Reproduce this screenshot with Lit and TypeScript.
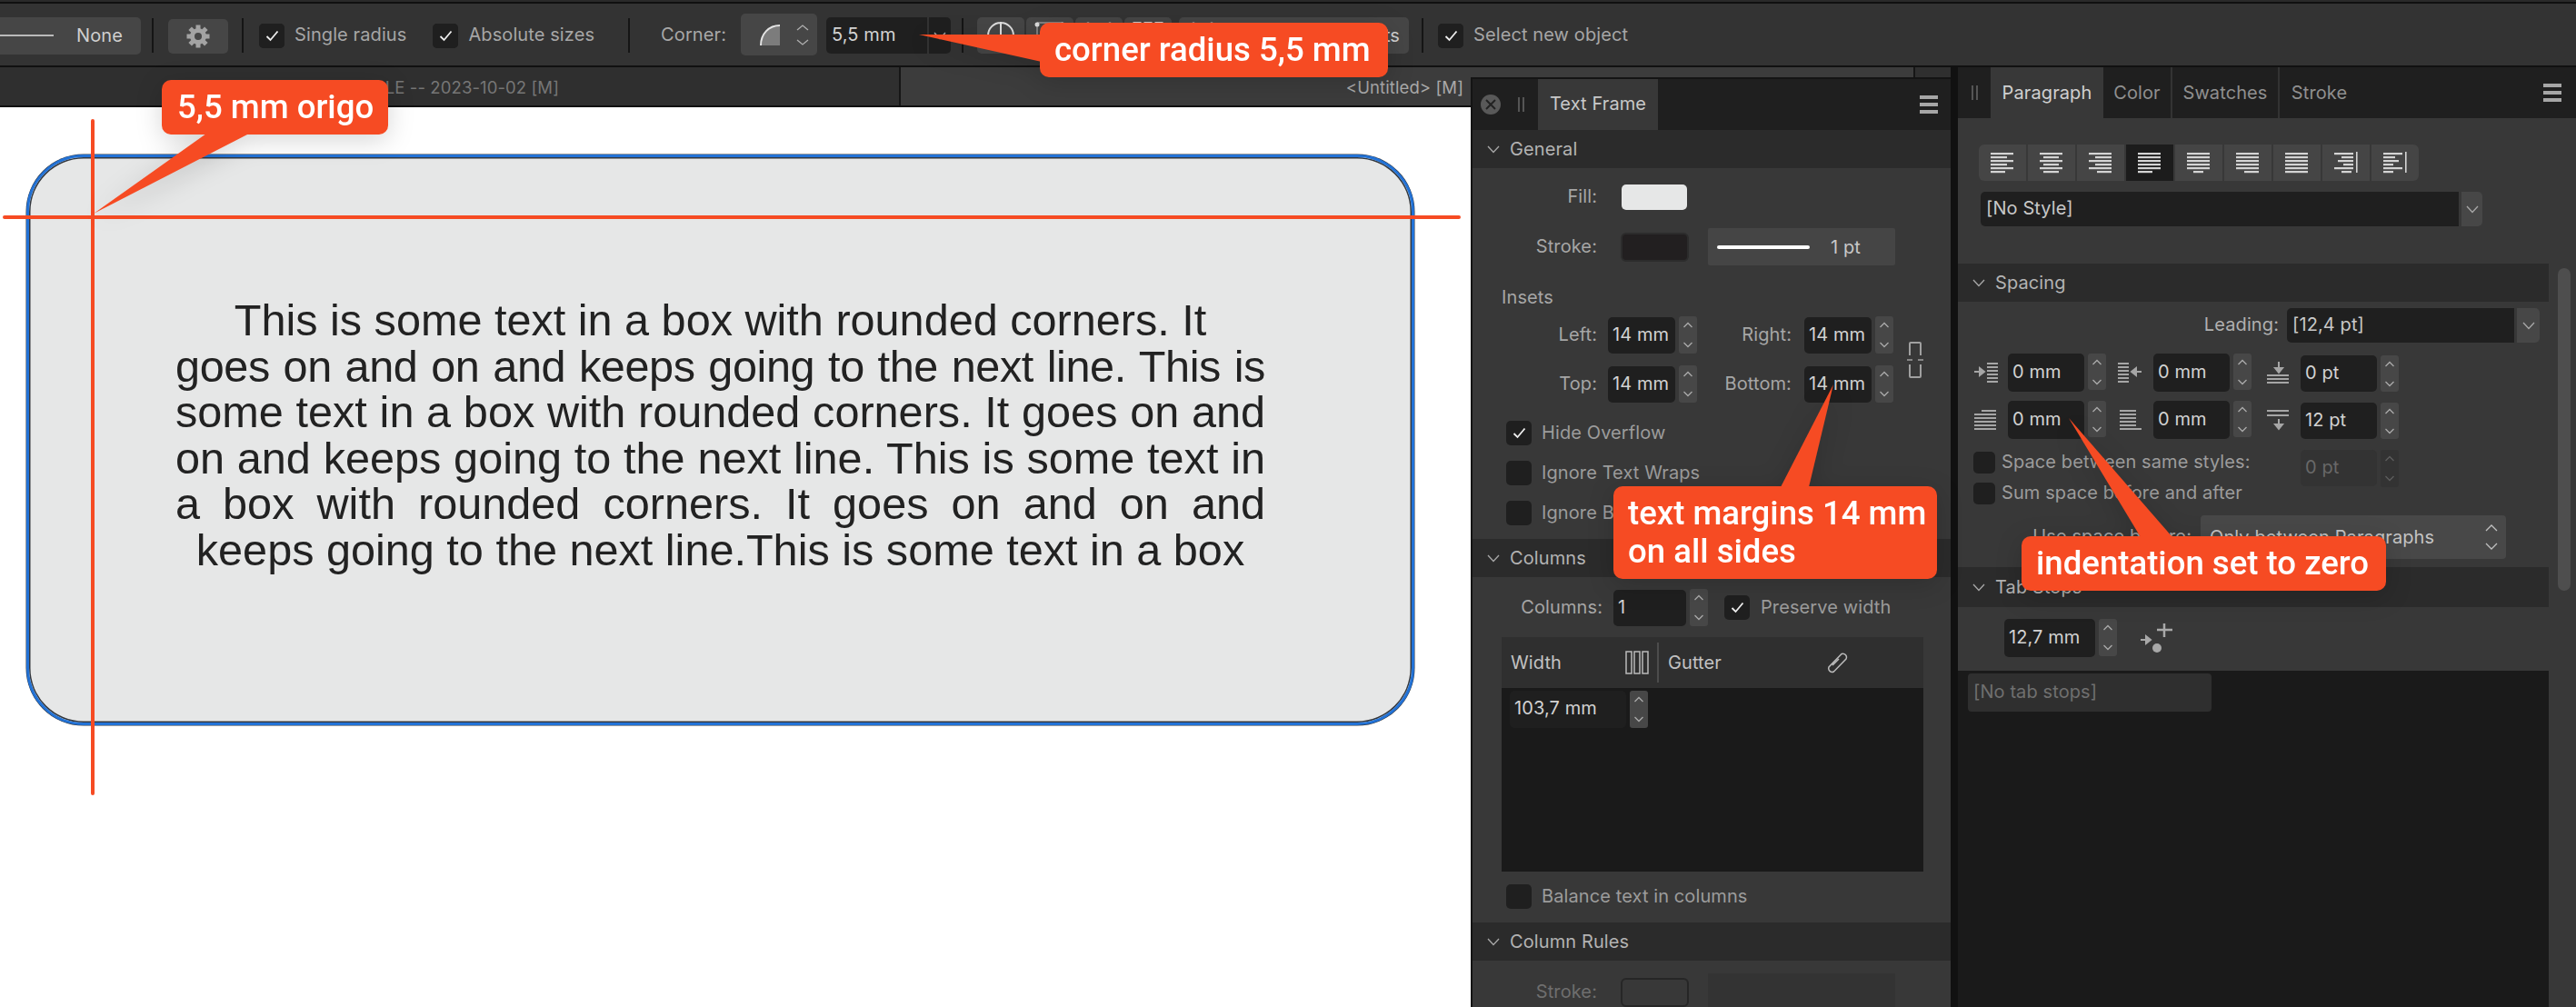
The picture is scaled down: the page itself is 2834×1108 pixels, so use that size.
import { LitElement, html, css, svg } from "lit";
import { customElement } from "lit/decorators.js";

const chev = html`<svg class="chev" width="14" height="9" viewBox="0 0 14 9"><path d="M1 1l6 6.5L13 1" fill="none" stroke="#a8a8a8" stroke-width="1.3"/></svg>`;
const stepper = (cls = "") => html`<span class="stepper ${cls}"><svg width="12" height="29" viewBox="0 0 12 29"><path d="M1.5 6l4.5-4.5L10.500 6M1.500 23l4.500 4.500 4.500-4.500" fill="none" stroke="currentColor" stroke-width="1.300"/></svg></span>`;
const input = (t: string, cls = "") => html`<span class="input ${cls}">${t}</span>`;
const check = (on: boolean, cls = "") => html`<span class="check ${cls}">${on ? html`<svg width="15" height="13" viewBox="0 0 15 13"><path d="M1.500 7l4 4 8-9.500" fill="none" stroke="#eee" stroke-width="1.800"/></svg>` : ""}</span>`;

const lines = (rows: [number, number][], extra: any = "") => html`<svg width="26" height="24" viewBox="0 0 26 24">${rows.map((r, i) => svg`<rect x=${r[0]} y=${1 + i * 4} width=${r[1]} height="2.200" fill="#d4d4d4"/>`)}${extra}</svg>`;
const alignIcons = [
  [[0, 25], [0, 18], [0, 25], [0, 18], [0, 25], [0, 16]],
  [[0, 25], [4, 17], [0, 25], [4, 17], [0, 25], [4, 17]],
  [[0, 25], [7, 18], [0, 25], [7, 18], [0, 25], [9, 16]],
  [[0, 25], [0, 25], [0, 25], [0, 25], [0, 25], [0, 16]],
  [[0, 25], [0, 25], [0, 25], [0, 25], [0, 25], [7, 11]],
  [[0, 25], [0, 25], [0, 25], [0, 25], [0, 25], [9, 16]],
  [[0, 25], [0, 25], [0, 25], [0, 25], [0, 25], [0, 25]],
] as [number, number][][];
const barIcon = (rows: [number, number][]) => lines(rows, svg`<rect x="24" y="0" width="1.600" height="23" fill="#d4d4d4"/>`);

const ic = "#a6a6a6";
const indent1 = html`<svg class="sp" width="26" height="24" viewBox="0 0 26 24"><path d="M0 11h8M6 7l5 4-5 4z" stroke=${ic} stroke-width="2" fill=${ic}/>${[1, 5, 9, 13, 17, 21].map((y) => svg`<rect x="14" y=${y} width="12" height="2" fill=${ic}/>`)}</svg>`;
const indent2 = html`<svg class="sp" width="26" height="24" viewBox="0 0 26 24">${[1, 5, 9, 13, 17, 21].map((y) => svg`<rect x="0" y=${y} width="12" height="2" fill=${ic}/>`)}<path d="M26 11h-8M20 7l-5 4 5 4z" stroke=${ic} stroke-width="2" fill=${ic}/></svg>`;
const before = html`<svg class="sp" width="26" height="24" viewBox="0 0 26 24"><path d="M13 0v9M9 7l4 5 4-5z" stroke=${ic} stroke-width="2" fill=${ic}/><rect y="14" width="24" height="2" fill=${ic}/><rect y="18" width="24" height="2" fill=${ic}/><rect y="22" width="24" height="2" fill=${ic}/></svg>`;
const first = html`<svg class="sp" width="26" height="24" viewBox="0 0 26 24"><rect x="8" y="1" width="16" height="2" fill=${ic}/>${[5, 9, 13, 17, 21].map((y) => svg`<rect y=${y} width="24" height="2" fill=${ic}/>`)}</svg>`;
const last = html`<svg class="sp" width="26" height="24" viewBox="0 0 26 24">${[1, 5, 9, 13, 17].map((y) => svg`<rect x="2" y=${y} width="18" height="2" fill=${ic}/>`)}<rect x="2" y="21" width="24" height="2" fill=${ic}/></svg>`;
const after = html`<svg class="sp" width="26" height="24" viewBox="0 0 26 24"><rect y="1" width="24" height="2" fill=${ic}/><rect y="6" width="24" height="2" fill=${ic}/><path d="M13 11v9M9 17l4 5 4-5z" stroke=${ic} stroke-width="2" fill=${ic}/></svg>`;
const burger = html`<span class="burger"><i></i><i></i><i></i></span>`;

@customElement("app-root")
export class AppRoot extends LitElement {
  static styles = css`
    :host { display: block; }
    * { box-sizing: border-box; }
    .root { position: relative; width: 2834px; height: 1108px; overflow: hidden; background: #111; font: 20px/24px Inter, "Liberation Sans", sans-serif; letter-spacing: 0.1px; color: #a6a6a6; display: flex; flex-direction: column; }
    .top { height: 4px; background: #2a2a2a; border-bottom: 2px solid #101010; flex: none; }
    .toolbar { height: 68px; flex: none; background: #333; display: flex; align-items: center; padding-top: 2px; }
    .main { height: 1036px; flex: none; margin-top: 2px; display: flex; }
    .none { width: 155px; height: 41px; background: #464646; border-radius: 0 5px 5px 0; display: flex; align-items: center; color: #cfcfcf; }
    .none i { width: 59px; height: 1.500px; background: #bbb; margin-right: 25px; }
    .tsep { width: 2px; height: 38px; background: #151515; flex: none; }
    .gear { width: 66px; height: 38px; margin-left: 16px; margin-top: 2px; background: #464646; border-radius: 5px; display: flex; align-items: center; justify-content: center; }
    .s1 { margin-left: 12px; } .s2 { margin-left: 15px; } .s3 { margin-left: 37px; } .s4 { margin-left: 12px; } .s5 { margin-left: 14px; }
    .tcheck { margin-left: 17px; width: 28px; height: 28px; }
    .t1 { margin-left: 11px; padding-bottom: 2px; }
    .tcheck.b { margin-left: 29px; }
    .tcheck.c { margin-left: 16px; }
    .corner-l { margin-left: 34px; color: #a8a8a8; padding-bottom: 2px; }
    .cbtn { width: 84px; height: 46px; margin-left: 16px; margin-top: -2px; background: #464646; border-radius: 5px; display: flex; align-items: center; position: relative; }
    .cbtn .shape { margin-left: 21px; }
    .cbtn .stp { margin-left: 17px; color: #aaa; }
    .tinput { width: 111px; height: 40px; margin-left: 10px; background: #1f1f1f; border-radius: 5px 0 0 5px; color: #d2d2d2; padding-left: 6px; line-height: 38px; }
    .tchev { width: 24px; height: 40px; margin-left: 2px; background: #1f1f1f; border-radius: 0 5px 5px 0; display: flex; align-items: center; justify-content: center; }
    .tb { height: 40px; width: 52px; background: #464646; border-radius: 5px; flex: none; margin-left: 2px; display: flex; justify-content: center; padding-top: 5px; }
    .tb.f { margin-left: 15px; }
    .tb.w { width: 253px; margin-left: 8px; justify-content: flex-start; padding: 0 10px 0 12px; line-height: 40px; color: #cfcfcf; }
    .tb.w span { flex: 1; text-align: right; }

    .docs { width: 2154px; flex: none; display: grid; grid-template-columns: 1618px 528px 8px; grid-template-rows: 42px 2px 1fr; height: 1034px; background: #111; }
    .tabs { grid-column: 1 / 3; grid-row: 1; display: flex; background: #2f2f2f; font-size: 18.500px; line-height: 44px; }
    .tab1 { width: 989px; padding-right: 374px; text-align: right; color: #767676; white-space: nowrap; overflow: hidden; }
    .tab2 { width: 1118px; background: #3c3c3c; border-left: 2px solid #161616; border-right: 2px solid #161616; text-align: right; padding-right: 495px; color: #a9a9a9; }
    .canvas { grid-column: 1; grid-row: 2 / 4; background: #fff; margin-top: 2px; padding: 52px 0 0 29px; }
    .box { width: 1527px; height: 628px; border-radius: 63px; border: 3px solid #2272d6; box-shadow: inset 0 0 0 1.500px #34383e, 0 0 0 0.500px #30343a; background: #e6e7e7; padding: 154px 161px 0; font: 48.600px/50.600px "Liberation Sans", Arial, sans-serif; letter-spacing: 0; color: #222; }
    .box div { white-space: nowrap; text-align: center; }
    .box div.j { white-space: normal; text-align: justify; text-align-last: justify; }
    .box div.tight { letter-spacing: -0.4px; }

    .tf { grid-column: 2; grid-row: 1 / 4; margin-top: 11px; z-index: 1; background: #2a2a2a; border-left: 2px solid #141414; border-top: 2px solid #141414; display: flex; flex-direction: column; height: 1023px; overflow: hidden; }
    .tfhead { height: 56px; flex: none; background: #1f1f1f; display: flex; align-items: center; }
    .close { width: 22px; height: 22px; border-radius: 50%; background: #595959; margin-left: 9px; display: flex; align-items: center; justify-content: center; }
    .grip { width: 7px; height: 16px; border-left: 2px solid #555; border-right: 2px solid #555; margin-left: 19px; }
    .tft { width: 132px; height: 56px; background: #383838; margin-left: 15px; line-height: 54px; text-align: center; color: #c9c9c9; }
    .burger { width: 20px; display: flex; flex-direction: column; gap: 4px; flex: none; }
    .burger i { height: 4px; background: #a6a6a6; }
    .tfhead .burger { margin-left: 288px; }
    .sec { width: 526px; flex: none; }
    .sh { height: 42px; background: #2b2b2b; display: flex; align-items: center; padding-left: 16px; color: #b3b3b3; }
    .sh .chev { margin-right: 11px; }
    .sb { background: #383838; overflow: hidden; }
    .sb.g { height: 408px; }
    .sb.c { height: 380px; }
    .sb.r { height: 60px; }
    .row { display: flex; align-items: center; }
    .lab { flex: none; text-align: right; padding-bottom: 2px; }
    .w137 { width: 137px; }
    .fill { margin-top: 18px; height: 28px; }
    .sw1 { width: 72px; height: 28px; margin-left: 27px; background: #e6e7e7; border-radius: 5px; }
    .strk { margin-top: 20px; height: 41px; }
    .sw2 { width: 75px; height: 32px; margin-left: 26px; background: #221f20; border: 2px solid #2c2c2c; border-radius: 6px; }
    .sbtn { width: 206px; height: 41px; margin-left: 21px; background: #454545; border-radius: 2px; display: flex; align-items: center; padding-left: 10px; color: #c8c8c8; }
    .sbtn i { width: 102px; height: 4px; background: #fff; border-radius: 2px; margin-right: 23px; }
    .ins { margin: 23px 0 0 32px; }
    .insets { display: flex; margin-top: 9px; }
    .irows { display: flex; flex-direction: column; gap: 13px; }
    .input { flex: none; height: 40px; background: #1f1f1f; border-radius: 5px; color: #d2d2d2; line-height: 38px; padding-left: 5px; }
    .w74 { width: 74px; margin-left: 12px; }
    .w74.rr { margin-left: 14px; }
    .stepper { flex: none; width: 20px; height: 41px; margin-left: 4px; background: #474747; border-radius: 3px; display: flex; align-items: center; justify-content: center; color: #aaa; align-self: flex-start; }
    .w104 { width: 104px; }
    .link { margin-left: 15px; align-self: center; }
    .check { flex: none; display: flex; align-items: center; justify-content: center; width: 28px; height: 27px; background: #1f1f1f; border-radius: 5px; }
    .cks { margin: 20px 0 0 37px; display: flex; flex-direction: column; gap: 17px; }
    .ckl { margin-left: 11px; white-space: nowrap; color: #9c9c9c; padding-bottom: 2px; }
    .colrow { margin-top: 13px; height: 41px; }
    .w143 { width: 143px; }
    .w80 { width: 80px; margin-left: 12px; }
    .colrow .check { margin-left: 18px; }
    .ckl.p { margin-left: 12px; }
    .tbl { width: 464px; margin: 12px 0 0 32px; }
    .th { height: 56px; background: #2f2f2f; display: flex; align-items: center; color: #c2c2c2; }
    .th .w { width: 136px; padding-left: 10px; }
    .th .d { width: 2px; height: 44px; background: #4c4c4c; margin-left: 9px; }
    .th .gut { width: 174px; margin-left: 10px; }
    .tbody { height: 202px; background: #1a1a1a; padding: 3px 9px; display: flex; }
    .w128 { width: 128px; height: 41px; background: #1f1f1f; }
    .bal { margin: 14px 0 0 37px; height: 27px; }
    .dim { color: #6e6e6e; }
    .crow { margin-top: 14px; height: 41px; }
    .sw3 { width: 75px; height: 32px; margin-left: 26px; border: 2px solid #262626; border-radius: 6px; }
    .sb3 { width: 206px; height: 41px; margin-left: 21px; background: #333; }

    .right { width: 680px; flex: none; display: flex; flex-direction: column; background: #383838; height: 1034px; }
    .rtabs { height: 56px; flex: none; background: #1f1f1f; display: flex; align-items: center; }
    .rtabs .grip { margin-left: 15px; height: 16px; }
    .rt { height: 56px; line-height: 56px; text-align: center; border-right: 2px solid #333; color: #8f8f8f; flex: none; }
    .rt.a { width: 124px; margin-left: 14px; background: #383838; color: #d0d0d0; border: 0; }
    .rt.b { width: 76px; } .rt.c { width: 118px; } .rt.d { width: 87px; border: 0; }
    .rtabs .burger { margin-left: 203px; }
    .rbody { display: flex; flex: 1; }
    .rcol { width: 650px; flex: none; display: flex; flex-direction: column; }
    .thumbwrap { padding: 165px 0 0 10px; }
    .thumb { width: 14px; height: 355px; border-radius: 7px; background: #4e4e4e; }
    .pbody { height: 160px; padding: 29px 0 0 23px; }
    .aligns { display: flex; gap: 2px; width: 484px; }
    .al { width: 52px; height: 40px; background: #454545; display: flex; align-items: center; justify-content: center; }
    .al.first { border-radius: 6px 0 0 6px; } .al.lastb { border-radius: 0 6px 6px 0; }
    .al.on { background: #1c1c1c; }
    .style { display: flex; margin: 12px 0 0 2px; }
    .sel { height: 38px; line-height: 36px; background: #1f1f1f; border-radius: 5px 0 0 5px; padding-left: 6px; color: #c8c8c8; flex: none; }
    .w526 { width: 526px; }
    .selc { width: 23px; height: 38px; margin-left: 3px; background: #474747; border-radius: 0 5px 5px 0; display: flex; align-items: center; justify-content: center; flex: none; }
    .sp-body { height: 292px; background: #383838; overflow: hidden; }
    .lead { margin-top: 7px; height: 38px; }
    .w353 { width: 353px; color: #b0b0b0; }
    .w250 { width: 250px; margin-left: 9px; }
    .selc.w25 { width: 25px; }
    .srow { display: flex; margin-top: 12px; height: 42px; align-items: flex-start; }
    .srow.two { margin-top: 10px; }
    .srow .sp { margin-top: 9px; flex: none; }
    .i1 { margin-left: 18px; } .i2 { margin-left: 13px; } .i3 { margin-left: 17px; }
    .w84 { width: 84px; height: 42px; margin-left: 11px; line-height: 40px; }
    .w84.m13 { margin-left: 13px; }
    .w84.t { height: 40px; margin-top: 2px; line-height: 38px; }
    .srow .t + .stepper { margin-top: 2px; }
    .srow .stepper { height: 40px; }
    .cks2 { display: flex; margin-top: 12px; height: 60px; }
    .cksl { width: 377px; padding: 2px 0 0 17px; display: flex; flex-direction: column; gap: 10px; flex: none; }
    .cksl .check { width: 24px; height: 24px; }
    .ck2 { display: flex; align-items: center; height: 24px; }
    .ckl.n { margin-left: 7px; }
    .dis { width: 84px; background: #333; color: #686868; }
    .dis + .stepper { background: #333; color: #5e5e5e; height: 41px; }
    .use { margin-top: 12px; display: flex; align-items: center; height: 48px; }
    .w257 { width: 257px; }
    .usel { width: 336px; height: 48px; margin-left: 10px; background: #484848; border-radius: 4px; display: flex; align-items: center; padding: 0 8px 0 10px; color: #c4c4c4; }
    .usel span { flex: 1; }
    .th2 { height: 44px; }
    .tsb { height: 70px; display: flex; align-items: flex-start; padding: 13px 0 0 51px; }
    .w100 { width: 100px; height: 42px; line-height: 40px; }
    .tsb .addic { margin-left: 26px; margin-top: 4px; }
    .list { flex: 1; background: #1a1a1a; padding: 3px 11px; }
    .item { width: 268px; height: 42px; background: #2f2f2f; border-radius: 4px; line-height: 40px; padding-left: 6px; color: #6f6f6f; }

    .annot { position: absolute; inset: 0; pointer-events: none; z-index: 5; filter: drop-shadow(0 6px 14px rgba(0, 0, 0, 0.16)); }
    .annot svg { position: absolute; left: 0; top: 0; }
    .cross { position: absolute; left: 0; top: 0; z-index: 3; pointer-events: none; }
    .call { position: absolute; background: #f64b23; border-radius: 10px; color: #fff; font: 500 36.600px/42px Roboto, "Liberation Sans", sans-serif; letter-spacing: 0; white-space: nowrap; padding: 9px 15px; }
    .c1 { left: 178px; top: 88px; width: 249px; height: 60px; padding-left: 17px; }
    .c2 { left: 1144px; top: 25px; width: 383px; height: 60px; padding-left: 16px; }
    .c3 { left: 1775px; top: 535px; width: 356px; height: 102px; padding-left: 16px; }
    .c4 { left: 2224px; top: 590px; width: 401px; height: 60px; padding-left: 16px; }
  `;

  render() {
    return html`<div class="root">
      <div class="top"></div>
      <div class="toolbar">
        <div class="none"><i></i>None</div>
        <span class="tsep s1"></span>
        <div class="gear"><svg width="26" height="26" viewBox="0 0 26 26"><g fill="#a3a3a3">${[0, 45, 90, 135].map((a) => svg`<rect x="10.500" y="0.500" width="5" height="25" transform="rotate(${a} 13 13)"/>`)}</g><circle cx="13" cy="13" r="6.500" fill="none" stroke="#a3a3a3" stroke-width="5"/><circle cx="13" cy="13" r="4" fill="#464646"/></svg></div>
        <span class="tsep s2"></span>
        <span class="check tcheck">${check(true)}</span><span class="t1">Single radius</span>
        <span class="check tcheck b">${check(true)}</span><span class="t1">Absolute sizes</span>
        <span class="tsep s3"></span>
        <span class="corner-l">Corner:</span>
        <div class="cbtn"><svg class="shape" width="23" height="23" viewBox="0 0 23 23"><path d="M1 23C1 10 10 1 22 1v22z" fill="#7c7c7c"/><path d="M1 23C1 10 10 1 22 1" fill="none" stroke="#e4e4e4" stroke-width="2"/></svg><svg class="stp" width="14" height="23" viewBox="0 0 14 23"><path d="M1 6l6-5 6 5M1 17l6 5 6-5" fill="none" stroke="#b0b0b0" stroke-width="1.300"/></svg></div>
        <span class="tinput">5,5 mm</span><span class="tchev">${chev}</span>
        <span class="tsep s4"></span>
        <span class="tb f"><svg width="32" height="22" viewBox="0 0 32 22"><path d="M2 15a14 14 0 0 1 28 0M16 0v15" fill="none" stroke="#ddd" stroke-width="2"/><rect y="15" width="32" height="3" fill="#ddd"/></svg></span>
        <span class="tb"><svg width="34" height="20" viewBox="0 0 34 20"><path d="M3 1h28M3 1v19" stroke="#bbb" fill="none"/><circle cx="3" cy="3" r="2.500" fill="#ddd"/><circle cx="31" cy="3" r="2.500" fill="#ddd"/></svg></span>
        <span class="tb"><svg width="34" height="20" viewBox="0 0 34 20"><circle cx="5" cy="3" r="2.500" fill="#ddd"/><circle cx="29" cy="3" r="2.500" fill="#ddd"/></svg></span>
        <span class="tb"><svg width="34" height="20" viewBox="0 0 34 20"><rect x="1" y="0.500" width="8" height="8" fill="none" stroke="#ccc"/><rect x="13" y="0.500" width="8" height="8" fill="none" stroke="#ccc"/><rect x="25" y="0.500" width="8" height="8" fill="none" stroke="#ccc"/></svg></span>
        <span class="tb w"><svg width="30" height="12" viewBox="0 0 30 12"><circle cx="4" cy="8" r="2.500" fill="#ddd"/><circle cx="24" cy="8" r="2.500" fill="#ddd"/></svg><span>Snap insets</span></span>
        <span class="tsep s5"></span>
        <span class="check tcheck c">${check(true)}</span><span class="t1">Select new object</span>
      </div>
      <div class="main">
        <div class="docs">
          <div class="tabs"><div class="tab1">TEXT EXAMPLE -- 2023-10-02 [M]</div><div class="tab2">&lt;Untitled&gt; [M]</div></div>
          <div class="canvas"><div class="box">
            <div>This is some text in a box with rounded corners. It</div>
            <div class="j tight">goes on and on and keeps going to the next line. This is</div>
            <div class="j">some text in a box with rounded corners. It goes on and</div>
            <div class="j">on and keeps going to the next line. This is some text in</div>
            <div class="j">a box with rounded corners. It goes on and on and</div>
            <div>keeps going to the next line.This is some text in a box</div>
          </div></div>
          <div class="tf">
            <div class="tfhead"><span class="close"><svg width="12" height="12" viewBox="0 0 12 12"><path d="M1 1l10 10M11 1L1 11" stroke="#222" stroke-width="2"/></svg></span><span class="grip"></span><span class="tft">Text Frame</span>${burger}</div>
            <div class="sec">
              <div class="sh">${chev}General</div>
              <div class="sb g">
                <div class="row fill"><span class="lab w137">Fill:</span><span class="sw1"></span></div>
                <div class="row strk"><span class="lab w137">Stroke:</span><span class="sw2"></span><span class="sbtn"><i></i>1 pt</span></div>
                <div class="ins">Insets</div>
                <div class="insets">
                  <div class="irows">
                    <div class="row"><span class="lab w137">Left:</span>${input("14 mm", "w74")}${stepper()}<span class="lab w104">Right:</span>${input("14 mm", "w74 rr")}${stepper()}</div>
                    <div class="row"><span class="lab w137">Top:</span>${input("14 mm", "w74")}${stepper()}<span class="lab w104">Bottom:</span>${input("14 mm", "w74 rr")}${stepper()}</div>
                  </div>
                  <svg class="link" width="18" height="40" viewBox="0 0 18 40"><path d="M15 15V2a1 1 0 0 0-1-1H4a1 1 0 0 0-1 1v13M15 25v13a1 1 0 0 1-1 1H4a1 1 0 0 1-1-1V25" fill="none" stroke="#a0a0a0" stroke-width="2"/><path d="M0 20h6M12 20h6" stroke="#a0a0a0" stroke-width="1.500"/></svg>
                </div>
                <div class="cks">
                  <div class="row">${check(true)}<span class="ckl">Hide Overflow</span></div>
                  <div class="row">${check(false)}<span class="ckl">Ignore Text Wraps</span></div>
                  <div class="row">${check(false)}<span class="ckl">Ignore Baseline Grid</span></div>
                </div>
              </div>
              <div class="sh">${chev}Columns</div>
              <div class="sb c">
                <div class="row colrow"><span class="lab w143">Columns:</span>${input("1", "w80")}${stepper()}${check(true)}<span class="ckl p">Preserve width</span></div>
                <div class="tbl">
                  <div class="th"><span class="w">Width</span><svg width="26" height="26" viewBox="0 0 26 26"><path d="M1 1h6v24H1zM10 1h6v24h-6zM19 1h6v24h-6z" fill="none" stroke="#bbb" stroke-width="1.500"/></svg><span class="d"></span><span class="gut">Gutter</span><svg width="24" height="24" viewBox="0 0 24 24"><path d="M17 2.500 3 17a4 4 0 0 0 5.500 5L22 8a4 4 0 0 0-5-5.500zM14 8 7 15" fill="none" stroke="#bbb" stroke-width="1.500"/></svg></div>
                  <div class="tbody">${input("103,7 mm", "w128")}${stepper()}</div>
                </div>
                <div class="row bal">${check(false)}<span class="ckl">Balance text in columns</span></div>
              </div>
              <div class="sh">${chev}Column Rules</div>
              <div class="sb r"><div class="row crow"><span class="lab w137 dim">Stroke:</span><span class="sw3"></span><span class="sb3"></span></div></div>
            </div>
          </div>
        </div>
        <div class="right">
          <div class="rtabs"><span class="grip"></span><span class="rt a">Paragraph</span><span class="rt b">Color</span><span class="rt c">Swatches</span><span class="rt d">Stroke</span>${burger}</div>
          <div class="rbody">
            <div class="rcol">
              <div class="pbody">
                <div class="aligns">
                  ${alignIcons.map((rows, i) => html`<span class="al ${i === 0 ? "first" : ""} ${i === 3 ? "on" : ""}">${lines(rows)}</span>`)}
                  <span class="al">${barIcon([[0, 21], [8, 13], [4, 17], [10, 11], [0, 21], [8, 11]])}</span>
                  <span class="al lastb">${barIcon([[0, 21], [0, 13], [0, 17], [0, 11], [0, 21], [0, 11]])}</span>
                </div>
                <div class="style"><span class="sel w526">[No Style]</span><span class="selc">${chev}</span></div>
              </div>
              <div class="sh">${chev}Spacing</div>
              <div class="sp-body">
                <div class="row lead"><span class="lab w353">Leading:</span><span class="sel w250">[12,4 pt]</span><span class="selc w25">${chev}</span></div>
                <div class="srow"><span class="i1">${indent1}</span>${input("0 mm", "w84")}${stepper()}<span class="i2">${indent2}</span>${input("0 mm", "w84 m13")}${stepper()}<span class="i3">${before}</span>${input("0 pt", "w84 t")}${stepper()}</div>
                <div class="srow two"><span class="i1">${first}</span>${input("0 mm", "w84")}${stepper()}<span class="i2">${last}</span>${input("0 mm", "w84 m13")}${stepper()}<span class="i3">${after}</span>${input("12 pt", "w84 t")}${stepper()}</div>
                <div class="cks2">
                  <div class="cksl">
                    <div class="ck2">${check(false)}<span class="ckl n">Space between same styles:</span></div>
                    <div class="ck2">${check(false)}<span class="ckl n">Sum space before and after</span></div>
                  </div>
                  ${input("0 pt", "dis")}${stepper()}
                </div>
                <div class="use"><span class="lab w257">Use space before:</span><span class="usel"><span>Only between Paragraphs</span><svg width="16" height="32" viewBox="0 0 16 32"><path d="M2 9l6-6 6 6M2 23l6 6 6-6" fill="none" stroke="#c0c0c0" stroke-width="1.300"/></svg></span></div>
              </div>
              <div class="sh th2">${chev}Tab Stops</div>
              <div class="tsb">${input("12,7 mm", "w100")}${stepper()}<svg class="addic" width="36" height="34" viewBox="0 0 36 34"><path d="M18 8v15M10 15h17" transform="translate(8 -7)" stroke="#a8a8a8" stroke-width="2.500"/><path d="M0 19h8M6 15l5 4-5 4z" stroke="#a8a8a8" stroke-width="2" fill="#a8a8a8"/><circle cx="18" cy="28" r="5" fill="#a8a8a8"/></svg></div>
              <div class="list"><div class="item">[No tab stops]</div></div>
            </div>
            <div class="thumbwrap"><div class="thumb"></div></div>
          </div>
        </div>
      </div>

      <svg class="cross" width="2834" height="1108" viewBox="0 0 2834 1108"><path d="M5 239H1605M102 133V873" stroke="#f64b23" stroke-width="4" stroke-linecap="round" fill="none"/></svg>
      <div class="annot">
        <svg width="2834" height="1108" viewBox="0 0 2834 1108"><g fill="#f64b23">
          <polygon points="103,235 227,147 274,147"/>
          <polygon points="1011,38 1146,38 1146,68"/>
          <polygon points="2017,423 1959,536 1990,536"/>
          <polygon points="2276,460 2355,591 2390,591"/>
        </g></svg>
        <div class="call c1">5,5 mm origo</div>
        <div class="call c2">corner radius 5,5 mm</div>
        <div class="call c3">text margins 14 mm<br />on all sides</div>
        <div class="call c4">indentation set to zero</div>
      </div>
    </div>`;
  }
}
